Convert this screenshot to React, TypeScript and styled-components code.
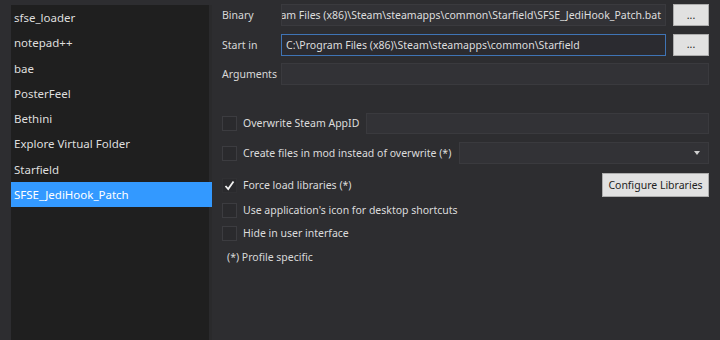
import React from "react";
import styled, { createGlobalStyle } from "styled-components";

const Global = createGlobalStyle`
  html, body { margin: 0; padding: 0; background: #2d2d30; }
  body { width: 720px; height: 340px; overflow: hidden; font-family: "Noto Sans", "Open Sans", sans-serif; font-size: 11.5px; color: #dcdcdc; }
  #root { height: 340px; }
`;

const Root = styled.div`
  display: flex;
  height: 340px;
  background: #2d2d30;
`;

const ListPanel = styled.div`
  margin: 5px 0 0 11px;
  width: 201px;
  background: linear-gradient(to right, #1f1f1f 198px, #2a2a2c 198px);
  display: flex;
  flex-direction: column;
`;

const ListItem = styled.div<{ $selected?: boolean }>`
  height: 25.3px;
  line-height: 25.3px;
  padding-left: 3px;
  background: ${(p) => (p.$selected ? "#3399ff" : "transparent")};
  color: ${(p) => (p.$selected ? "#ffffff" : "#dedede")};
  white-space: nowrap;
`;

const Right = styled.div`
  flex: 1;
  padding: 4px 11px 0 10px;
  display: flex;
  flex-direction: column;
  font-size: 10.5px;
`;

const FieldGrid = styled.div`
  display: grid;
  grid-template-columns: 52px 1fr 36px;
  grid-auto-rows: 22px;
  column-gap: 7px;
  row-gap: 7.5px;
  align-items: center;
`;

const Label = styled.div`
  color: #d8d8d8;
`;

const TextBox = styled.div<{ $focused?: boolean; $span?: boolean }>`
  height: 22px;
  box-sizing: border-box;
  background: ${(p) => (p.$focused ? "#2b2b30" : "#323236")};
  border: 1px solid ${(p) => (p.$focused ? "#3f74b5" : "#3a3a3e")};
  display: flex;
  align-items: center;
  overflow: hidden;
  white-space: nowrap;
  padding: 0 4px;
  color: #dedede;
  grid-column: ${(p) => (p.$span ? "2 / 4" : "auto")};
`;

const EndBox = styled(TextBox)`
  justify-content: flex-end;
`;

const DotsButton = styled.button`
  height: 22px;
  box-sizing: border-box;
  background: #e1e1e1;
  border: 1px solid #adadad;
  color: #222;
  font-family: inherit;
  font-size: 10.5px;
  padding: 0;
  line-height: 1;
`;

const Options = styled.div`
  margin-top: 26px;
  display: flex;
  flex-direction: column;
`;

const OptRow = styled.div<{ $h: number }>`
  display: flex;
  align-items: center;
  height: ${(p) => p.$h}px;
  gap: 6px;
`;

const Box = styled.div<{ $checked?: boolean }>`
  width: 15px;
  height: 15px;
  box-sizing: border-box;
  border: 1px solid ${(p) => (p.$checked ? "#303033" : "#3c3c40")};
  background: #2a2a2d;
  display: flex;
  align-items: center;
  justify-content: center;
  flex: none;
`;

const CheckBox = ({ checked }: { checked?: boolean }) => (
  <Box $checked={checked}>
    {checked && (
      <svg width="11" height="11" viewBox="0 0 11 11">
        <path d="M1.5 6 L4.2 9 L9.5 1.5" stroke="#f2f2f2" strokeWidth="1.8" fill="none" />
      </svg>
    )}
  </Box>
);

const OptLabel = styled.span`
  white-space: nowrap;
  color: #dcdcdc;
`;

const Fill = styled.div`
  flex: 1;
  height: 21px;
  box-sizing: border-box;
  background: #323236;
  border: 1px solid #3a3a3e;
  margin-left: 1px;
`;

const Combo = styled(Fill)`
  display: flex;
  align-items: center;
  justify-content: flex-end;
  padding-right: 8px;
  height: 22px;
  margin-left: 2px;
`;

const Spacer = styled.div`
  flex: 1;
`;

const ConfigButton = styled.button`
  height: 24px;
  width: 107px;
  box-sizing: border-box;
  background: #e1e1e1;
  border: 1px solid #adadad;
  color: #1e1e1e;
  font-family: inherit;
  font-size: 10.5px;
  padding: 0;
`;

const Note = styled.div`
  margin-top: 5px;
  line-height: 15px;
  padding-left: 5px;
  color: #d8d8d8;
`;

const items = [
  "sfse_loader",
  "notepad++",
  "bae",
  "PosterFeel",
  "Bethini",
  "Explore Virtual Folder",
  "Starfield",
  "SFSE_JediHook_Patch",
];

export default function App() {
  return (
    <>
      <Global />
      <Root>
        <ListPanel>
          {items.map((it, i) => (
            <ListItem key={it} $selected={i === items.length - 1}>
              {it}
            </ListItem>
          ))}
        </ListPanel>
        <Right>
          <FieldGrid>
            <Label>Binary</Label>
            <EndBox>C:\Program Files (x86)\Steam\steamapps\common\Starfield\SFSE_JediHook_Patch.bat</EndBox>
            <DotsButton>...</DotsButton>
            <Label>Start in</Label>
            <TextBox $focused>C:\Program Files (x86)\Steam\steamapps\common\Starfield</TextBox>
            <DotsButton>...</DotsButton>
            <Label>Arguments</Label>
            <TextBox $span />
          </FieldGrid>
          <Options>
            <OptRow $h={24}>
              <CheckBox />
              <OptLabel>Overwrite Steam AppID</OptLabel>
              <Fill />
            </OptRow>
            <OptRow $h={36}>
              <CheckBox />
              <OptLabel>Create files in mod instead of overwrite (*)</OptLabel>
              <Combo>
                <svg width="6" height="4" viewBox="0 0 6 4">
                  <path d="M0 0 H6 L3 4 Z" fill="#d0d0d0" />
                </svg>
              </Combo>
            </OptRow>
            <OptRow $h={28}>
              <CheckBox checked />
              <OptLabel>Force load libraries (*)</OptLabel>
              <Spacer />
              <ConfigButton>Configure Libraries</ConfigButton>
            </OptRow>
            <OptRow $h={22}>
              <CheckBox />
              <OptLabel>Use application's icon for desktop shortcuts</OptLabel>
            </OptRow>
            <OptRow $h={24}>
              <CheckBox />
              <OptLabel>Hide in user interface</OptLabel>
            </OptRow>
          </Options>
          <Note>(*) Profile specific</Note>
        </Right>
      </Root>
    </>
  );
}
